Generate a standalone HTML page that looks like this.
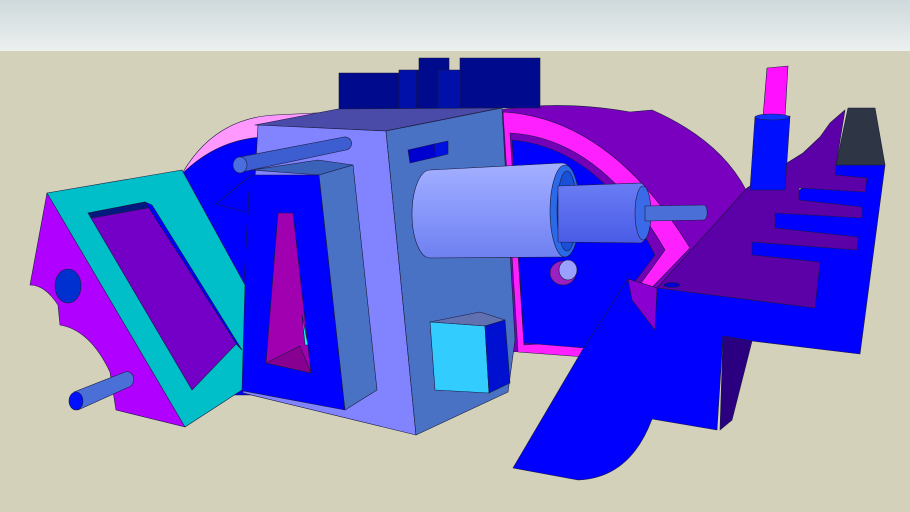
<!DOCTYPE html>
<html><head><style>html,body{margin:0;padding:0;width:910px;height:512px;overflow:hidden}svg{display:block}</style></head>
<body>
<svg width="910" height="512" viewBox="0 0 910 512" xmlns="http://www.w3.org/2000/svg" stroke="#1a1a40" stroke-width="0.6" stroke-linejoin="round">
<defs>
<linearGradient id="sky" x1="0" y1="0" x2="0" y2="1"><stop offset="0" stop-color="#cfd9db"/><stop offset="1" stop-color="#ecf0ef"/></linearGradient>
<linearGradient id="cyl" x1="0" y1="0" x2="0" y2="1"><stop offset="0" stop-color="#a4b0ff"/><stop offset="0.5" stop-color="#8898fb"/><stop offset="1" stop-color="#6f80f0"/></linearGradient>
<linearGradient id="cyl2" x1="0" y1="0" x2="0" y2="1"><stop offset="0" stop-color="#6a7cf4"/><stop offset="1" stop-color="#4a5ce6"/></linearGradient>
</defs>
<rect x="0" y="0" width="910" height="51" fill="url(#sky)" stroke="none"/>
<rect x="0" y="51" width="910" height="461" fill="#d4d1bb" stroke="none"/>

<!-- back purple disk -->
<path d="M500,110 Q560,100 630,112 L652,110 Q720,140 746,190 L700,262 L600,345 L512,352 Z" fill="#7a00bf"/>
<path d="M503,112 Q610,118 690,248 L640,300 L585,357 L518,352 Z" fill="#ff20ff"/>
<path d="M510,133 Q600,138 665,250 L600,340 L524,345 Z" fill="#7400b8"/>
<path d="M512,140 Q600,148 655,255 L585,348 L524,343 Z" fill="#0000ff"/>
<ellipse cx="563" cy="273" rx="13" ry="12" fill="#9a20c0"/>
<ellipse cx="568" cy="270" rx="9" ry="10" fill="#9aa0ff"/>

<!-- pink back disk left -->
<path d="M183,172 Q215,118 275,115 L335,112 L335,180 L200,200 Z" fill="#ff99ff"/>
<path d="M180,176 Q215,140 262,137 L262,395 L205,395 Z" fill="#0000ff"/>
<path d="M216,204 L250,176 L250,213 Z" fill="#0000ff"/>

<!-- top blocks -->
<rect x="339" y="73" width="60" height="45" fill="#000a8c"/>
<rect x="399" y="70" width="17" height="45" fill="#0010a8"/>
<rect x="416" y="70" width="22" height="43" fill="#000a90"/>
<rect x="419" y="58" width="30" height="55" fill="#000a8c"/>
<rect x="438" y="70" width="22" height="42" fill="#0010a8"/>
<rect x="460" y="58" width="80" height="50" fill="#000a8c"/>

<!-- main box -->
<polygon points="255,125 338,109 500,108 385,131" fill="#4a4aa8"/>
<polygon points="258,125 386,131 416,435 243,393" fill="#8284ff"/>
<polygon points="386,131 502,108 515,340 508,392 416,435" fill="#4a72c4"/>
<polygon points="408,150 434,144 436,157 410,163" fill="#0000d0"/>
<polygon points="434,144 448,141 448,154 436,157" fill="#0010e0"/>

<!-- cylinders -->
<path d="M430,170 L562,163 A18,47 0 0 1 562,257 L430,258 A18,44 0 0 1 430,170 Z" fill="url(#cyl)"/>
<ellipse cx="565" cy="211" rx="15" ry="46" fill="#2a6ae8"/>
<ellipse cx="567" cy="211" rx="10" ry="40" fill="#1a50d8"/>
<path d="M558,186 L640,183 A10,30 0 0 1 640,243 L558,242 Z" fill="url(#cyl2)"/>
<ellipse cx="643" cy="213" rx="8" ry="27" fill="#3a6ae8"/>
<path d="M645,206 L704,205 A3,7 0 0 1 704,220 L645,221 Z" fill="#4a70d8"/>

<!-- trapezoid frame -->
<polygon points="252,170 318,160 353,165 319,175" fill="#3a62b8"/>
<polygon points="250,175 319,175 345,410 238,390" fill="#0000ff"/>
<polygon points="319,175 353,165 377,390 345,410" fill="#4a72c4"/>
<polygon points="278,213 293,213 311,373 266,363" fill="#a000b0"/>
<polygon points="266,363 300,346 311,373" fill="#880090"/>
<polygon points="302,315 305,345 308,345" fill="#00ffff"/>

<!-- top rod -->
<path d="M240,157 L344,137 A6,6 0 0 1 346,150 L242,172 A7,7 0 0 1 240,157 Z" fill="#3d5ed0"/>
<ellipse cx="240" cy="165" rx="7" ry="8" fill="#4a6ee0"/>

<!-- cyan block small -->
<polygon points="430,322 480,312 505,320 485,326" fill="#6070b0"/>
<polygon points="430,322 485,326 489,393 435,390" fill="#33ccff"/>
<polygon points="485,326 505,320 510,383 489,393" fill="#0010d0"/>

<!-- left magenta/cyan piece -->
<path d="M47,193 L30,285 Q45,285 58,305 L60,325 Q90,330 110,372 L116,410 L185,427 L160,360 Z" fill="#b000ff"/>
<ellipse cx="68" cy="286" rx="13" ry="17" fill="#0030d0"/>
<polygon points="47,193 182,170 245,285 242,390 185,427" fill="#00bfc8"/>
<polygon points="88,213 145,202 237,343 192,390" fill="#7400c8"/>
<polygon points="88,213 145,202 148,208 92,218" fill="#001a80"/>
<polygon points="145,202 152,205 242,350 237,345" fill="#0000ff"/>
<!-- left rod -->
<path d="M74,392 L125,372 A6,7 0 0 1 129,387 L78,410 Z" fill="#4a70d8"/>
<ellipse cx="76" cy="401" rx="7" ry="9" fill="#0010ff"/>

<!-- right structure -->
<!-- blue F -->
<path d="M513,468 L583,349 L628,279 L657,288 L836,165 L885,165 L860,354 L752,341 L723,336 L717,430 L652,419 Q630,478 578,480 Z" fill="#0000ff"/>
<!-- purple top face -->
<polygon points="657,288 747,188 803,153 820,137 830,123 845,110 836,165 835,175 867,178 865,192 799,188 799,200 862,207 862,218 775,213 775,228 858,237 857,250 752,242 752,255 820,262 815,308" fill="#5c00a8"/>
<polygon points="848,108 875,108 885,165 836,165" fill="#2e3545"/>
<polygon points="628,279 657,288 655,330 632,300" fill="#8a00d0"/>
<polygon points="723,336 752,341 732,420 720,430" fill="#2a0080"/>
<ellipse cx="672" cy="285" rx="8" ry="2.5" fill="#0000d0"/>
<!-- tower -->
<path d="M767,68 L788,66 L785,117 L763,117 Z" fill="#ff10ff"/>
<path d="M755,117 L790,116 L785,190 L750,190 Z" fill="#0010ff"/>
<ellipse cx="772" cy="117" rx="17" ry="3" fill="#1030ff"/>
</svg>
</body></html>
